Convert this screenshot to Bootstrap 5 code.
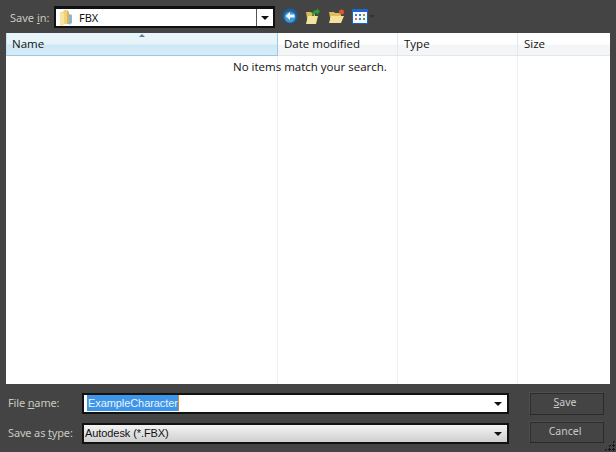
<!DOCTYPE html>
<html><head><meta charset="utf-8"><title>Save</title>
<link href="https://cdn.jsdelivr.net/npm/bootstrap@5.3.0/dist/css/bootstrap.min.css" rel="stylesheet">
<style>
html,body{margin:0;height:452px;overflow:hidden;background:#444;}
.dlg{width:616px;height:452px;position:relative;font-family:"Noto Sans",sans-serif;font-size:11px;color:#c9c9c0;line-height:1;}
.toprow{height:33px;padding:6px 0 0 10px;}
.lbl{width:44px;padding-top:6px;}
.combo{height:22px;background:#fff;border:2px solid #111;border-top-width:3px;color:#111;}
.savein{width:221px;}
.comboval{flex:1;min-width:0;height:100%;padding-left:3px;}
.folderbig{margin-right:6px;}
.arrowbox{width:17px;height:100%;border-left:1px solid #555;}
.tri{width:0;height:0;border-left:4px solid transparent;border-right:4px solid transparent;border-top:4px solid #111;}
.tools{margin:1px 0 0 7px;gap:7px;}
.listwrap{margin:0 6px;height:351px;background:#fff;color:#111;font-family:"Open Sans",sans-serif;font-size:11.5px;position:relative;}
.hdr{height:23px;background:linear-gradient(#fff 0,#fff 50%,#f4f5f7 55%,#f4f5f7 100%);border-bottom:1px solid #e3e6ea;}
.hcol{border-right:1px solid #e3e8ee;padding:5px 0 0 6px;position:relative;height:100%;}
.hname{width:272px;padding-left:5px;background:linear-gradient(#e8f5fb 0,#e6f4fa 50%,#cde8f5 55%,#d6ecf7 100%);border-right:1px solid #97c9e8;border-bottom:1px solid #97c9e8;border-left:1px solid #c3e3f4;height:23px;}
.hmid{width:120px;}
.sort{position:absolute;left:132px;top:1px;width:0;height:0;border-left:3px solid transparent;border-right:3px solid transparent;border-bottom:3px solid #5d7f95;}
.bodygrid{height:328px;position:relative;}
.vcol{height:100%;border-right:1px solid #eef0f3;}
.v1{width:272px;}.v2{width:120px;}
.empty{position:absolute;left:0;right:0;top:5px;padding-left:227px;white-space:nowrap;}
.bottom{padding:8px 12px 0 8px;column-gap:20px;}
.fields{width:501px;row-gap:9px;padding-top:1px;}
.frow{height:21px;}
.flbl{width:74px;flex:none;margin-top:-3px;letter-spacing:-.15px;}
.fbox{flex:1;height:21px;background:#fff;border:2px solid #111;color:#111;font-family:"Liberation Sans",sans-serif;font-size:11px;letter-spacing:-.08px;}
.ftext{flex:1;padding-left:3px;}
.ftext2{padding-left:1px;}
.sel{background:#3d95e8;color:#eaf3ff;padding:2px 0 2px 1px;border-right:1px solid #d8852f;}
.fgrad{background:linear-gradient(#f3f3f3,#cfcfcf);}
.arrow2{width:18px;}
.btns{width:75px;row-gap:6px;}
.xbtn{--bs-btn-padding-x:0;--bs-btn-padding-y:0;--bs-btn-font-size:10.5px;--bs-btn-color:#c9c9c9;--bs-btn-bg:#444;--bs-btn-border-color:#2d2d2d;--bs-btn-border-radius:0;--bs-btn-line-height:1;height:22px;padding-bottom:2px;padding-right:3px;font-family:"Noto Sans",sans-serif;border-width:1px;border-color:#4e4e4e #2a2a2a #2a2a2a #4e4e4e;box-shadow:inset 1px 1px 0 #2d2d2d;}
.xbtn1{height:23px;}
.grip{position:absolute;right:1px;bottom:1px;width:11px;height:11px;background-image:radial-gradient(circle at 1.5px 1.5px,#151515 1.2px,transparent 1.4px);background-size:4px 4px;clip-path:polygon(100% 0,100% 100%,0 100%);}
</style></head>
<body>
<div class="dlg">
 <div class="toprow d-flex align-items-start">
  <div class="lbl"><span>Save <u>i</u>n:</span></div>
  <div class="combo savein d-flex align-items-center">
   <div class="comboval d-flex align-items-center">
    <svg class="folderbig" width="14" height="16" viewBox="0 0 14 16"><path d="M1 2h3l1-2h3v14H4l-3 2z" fill="#efd27c"/><path d="M8 0l2 2v12l-2 0z" fill="#d9b653"/><path d="M10 4l3 1v8l-3 2z" fill="#8ab5d8"/><path d="M1 2l4 1v12l-4 1z" fill="#f6e49f"/></svg>
    <span>FBX</span>
   </div>
   <div class="arrowbox d-flex align-items-center justify-content-center"><div class="tri"></div></div>
  </div>
  <div class="tools d-flex align-items-center">
   <svg width="16" height="16" viewBox="0 0 16 16"><circle cx="8" cy="8" r="7.5" fill="#1a5f9f"/><circle cx="8" cy="9" r="5.5" fill="#3f9ad8"/><path d="M3.5 8L8 4v2.5h4.5v3H8V12z" fill="#f2f7fb"/></svg>
   <svg width="16" height="18" viewBox="0 0 16 18"><path d="M1 5h5l1 1h3v11H3z" fill="#d8bb5e"/><path d="M3 9h10l-2 8H1z" fill="#f3e39b"/><path d="M7 9c0-4 2-6 5-6V1l3 3.5L12 8V6c-2 0-3 1-3 3z" fill="#2f9a35"/></svg>
   <svg width="17" height="15" viewBox="0 0 17 15"><path d="M1 3h5l1 1h6v10H3z" fill="#dcbc5e"/><path d="M3 7h13l-3 7H1z" fill="#f4e29a"/><circle cx="13.5" cy="3" r="2.5" fill="#e2562e"/></svg>
   <svg width="23" height="15" viewBox="0 0 23 15"><rect x=".5" y=".5" width="15" height="14" fill="#f4f8ff" stroke="#1a5fc4"/><rect x="0" y="0" width="16" height="3" fill="#1f66cc"/><g fill="#3b79d6"><rect x="3" y="5" width="2" height="2"/><rect x="7" y="5" width="2" height="2"/></g><rect x="11" y="5" width="2" height="2" fill="#e2752e"/><rect x="3" y="9" width="2" height="2" fill="#e2752e"/><rect x="7" y="9" width="2" height="2" fill="#3b79d6"/><rect x="11" y="9" width="2" height="2" fill="#3ea04a"/><path d="M17 6h6l-3 3z" fill="#333"/></svg>
  </div>
 </div>
 <div class="listwrap">
  <div class="hdr d-flex">
   <div class="hcol hname"><i class="sort"></i>Name</div>
   <div class="hcol hmid">Date modified</div>
   <div class="hcol hmid">Type</div>
   <div class="hcol flex-fill border-0">Size</div>
  </div>
  <div class="bodygrid d-flex">
   <div class="vcol v1"></div><div class="vcol v2"></div><div class="vcol v2"></div>
   <div class="empty">No items match your search.</div>
  </div>
 </div>
 <div class="bottom d-flex">
  <div class="fields d-flex flex-column">
   <div class="frow d-flex align-items-center">
    <div class="flbl">File <u>n</u>ame:</div>
    <div class="fbox d-flex align-items-center"><div class="ftext"><span class="sel">ExampleCharacter</span></div><div class="arrow2 d-flex justify-content-center"><div class="tri"></div></div></div>
   </div>
   <div class="frow d-flex align-items-center">
    <div class="flbl">Save as <u>t</u>ype:</div>
    <div class="fbox fgrad d-flex align-items-center"><div class="ftext ftext2">Autodesk (*.FBX)</div><div class="arrow2 d-flex justify-content-center"><div class="tri"></div></div></div>
   </div>
  </div>
  <div class="btns d-flex flex-column">
   <button class="btn xbtn xbtn1"><u>S</u>ave</button>
   <button class="btn xbtn">Cancel</button>
  </div>
 </div>
 <div class="grip"></div>
</div>
<script src="https://cdn.jsdelivr.net/npm/bootstrap@5.3.0/dist/js/bootstrap.bundle.min.js"></script>
</body></html>
